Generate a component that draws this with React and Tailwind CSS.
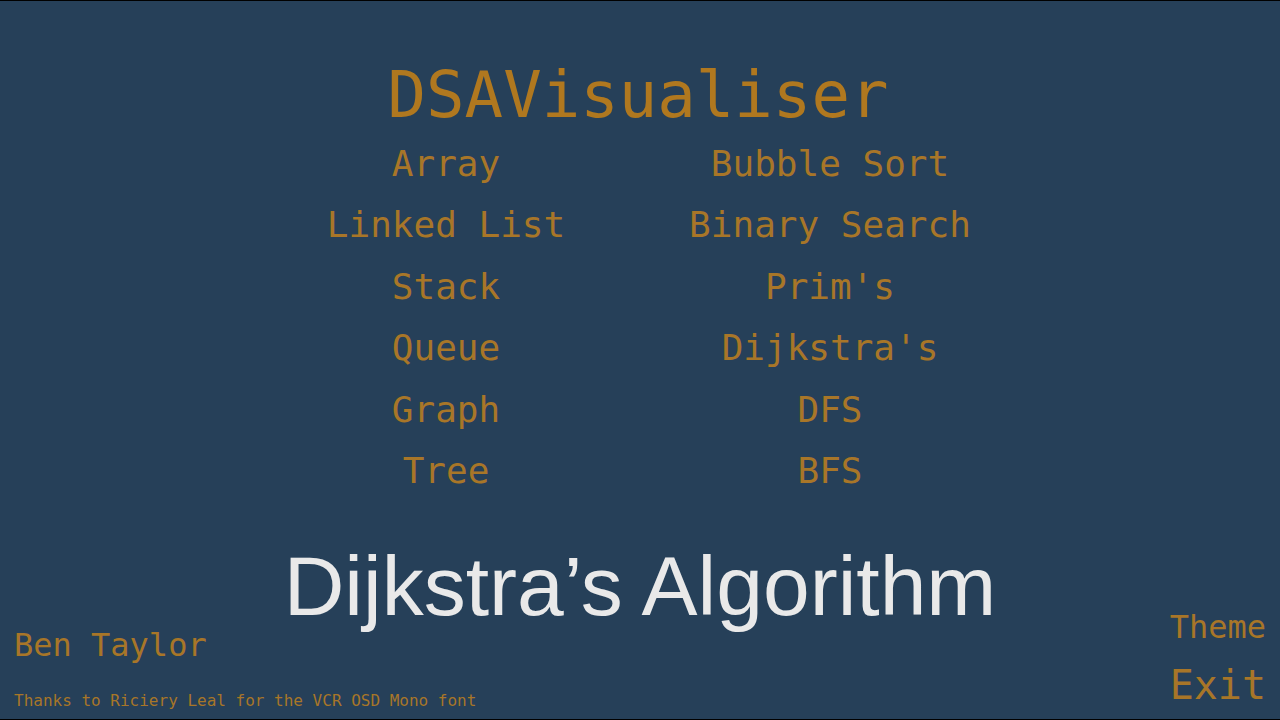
const STRUCTURES = ["Array", "Linked List", "Stack", "Queue", "Graph", "Tree"];

const ALGORITHMS = [
  "Bubble Sort",
  "Binary Search",
  "Prim's",
  "Dijkstra's",
  "DFS",
  "BFS",
];

function MenuColumn({ label, items }) {
  return (
    <ul aria-label={label} className="grid auto-rows-fr">
      {items.map((item) => (
        <li key={item} className="flex items-center justify-center">
          <button type="button" className="cursor-pointer text-4xl whitespace-nowrap hover:text-[#d0912c]">
            {item}
          </button>
        </li>
      ))}
    </ul>
  );
}

export default function App() {
  return (
    <div className="flex min-h-screen flex-col border-y border-black bg-[#264059] font-['DejaVu_Sans_Mono',monospace] text-[#a87628]">
      <header className="pt-[62px] pr-1 text-center">
        <h1 className="text-[64px] leading-[64px] text-[#b0781f]">DSAVisualiser</h1>
      </header>

      <main className="flex flex-1 justify-center pt-1.5 pr-1">
        <nav className="grid w-full max-w-3xl grid-cols-2">
          <MenuColumn label="Data structures" items={STRUCTURES} />
          <MenuColumn label="Algorithms" items={ALGORITHMS} />
        </nav>
      </main>

      <footer className="relative flex items-end justify-between px-3.5 pt-[105px]">
        <div className="pb-1.5">
          <p className="text-[32px] leading-10">Ben Taylor</p>
          <p className="mt-6 text-base leading-6">Thanks to Riciery Leal for the VCR OSD Mono font</p>
        </div>

        <div className="flex flex-col items-start gap-3.5 pb-2.5">
          <button type="button" className="cursor-pointer text-[32px] leading-10 hover:text-[#d0912c]">
            Theme
          </button>
          <button type="button" className="cursor-pointer text-[40px] leading-12 hover:text-[#d0912c]">
            Exit
          </button>
        </div>

        {/* Section caption, laid over the menu */}
        <h2 className="pointer-events-none absolute inset-x-0 top-9 text-center font-['Liberation_Sans',Arial,sans-serif] text-[84px] leading-24 text-[#e9e9e9]">
          Dijkstra’s Algorithm
        </h2>
      </footer>
    </div>
  );
}
